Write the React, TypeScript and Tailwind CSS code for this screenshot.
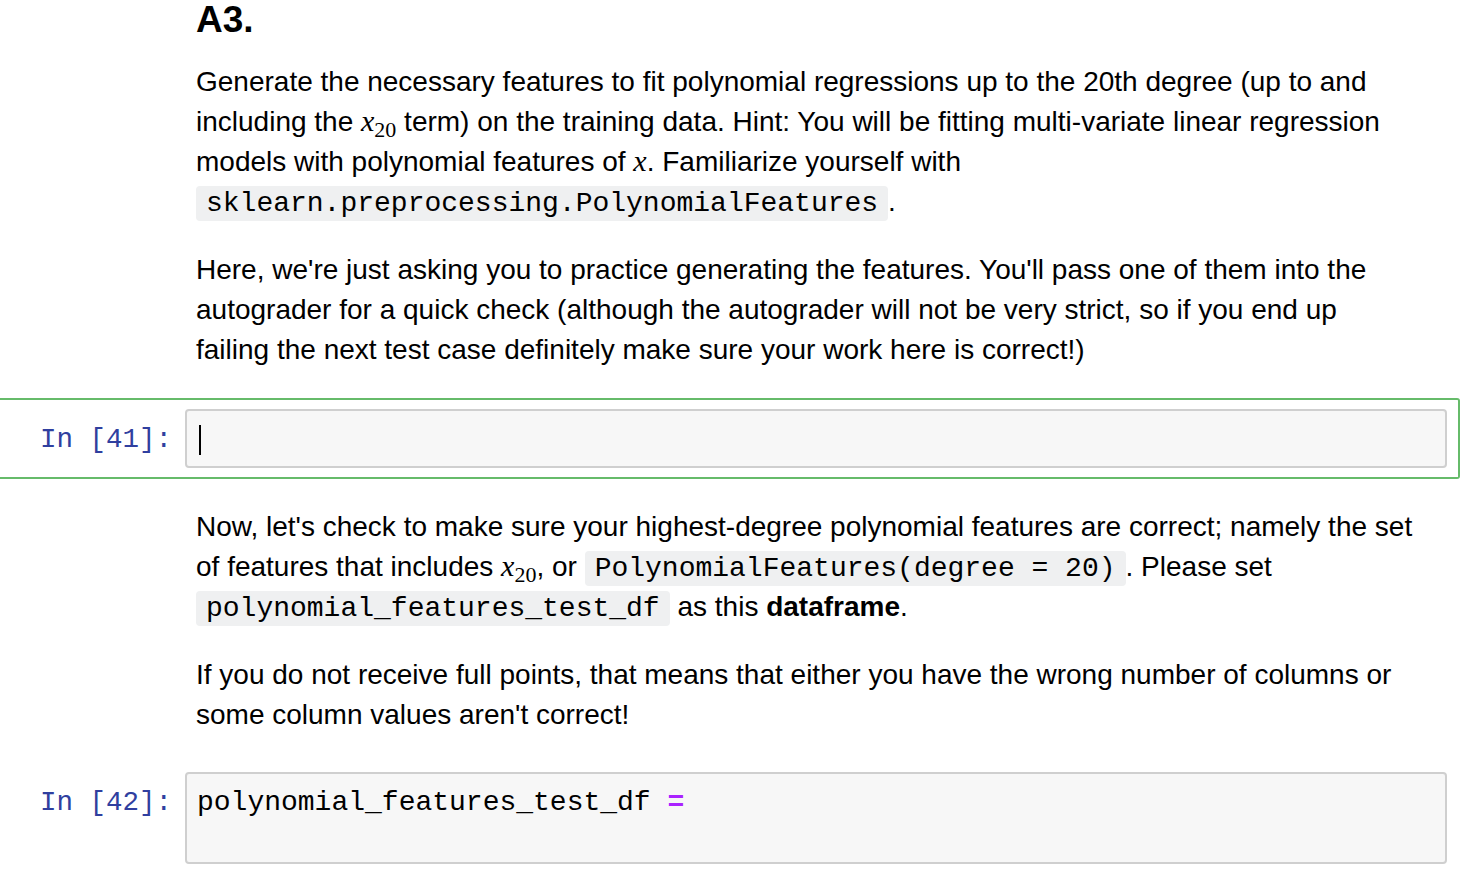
import React from 'react';

const sans = "font-['Liberation_Sans',Arial,sans-serif]";
const mono = "font-['Liberation_Mono','Courier_New',monospace]";

function Code({ children }: { children: React.ReactNode }) {
  return (
    <code className={`${mono} text-[28px] leading-none bg-[#eff0f1] rounded-[4px] px-[10px] py-[2px]`}>{children}</code>
  );
}

function MathX({ sub }: { sub?: string }) {
  return (
    <span className="font-['Liberation_Serif','Times_New_Roman',serif] whitespace-nowrap leading-none">
      <span className="italic text-[30px] leading-none">x</span>
      {sub && <span className="text-[22px] leading-none relative top-[6px]">{sub}</span>}
    </span>
  );
}

function Markdown({ children }: { children: React.ReactNode }) {
  return (
    <div className="border-2 border-transparent border-l-0 pl-[185px] pr-[11px]">
      <div className={`${sans} text-[28px] leading-[40px] text-black px-[11px] w-[1262px]`}>{children}</div>
    </div>
  );
}

function CodeCell({ n, lines, selected }: { n: number; lines: React.ReactNode[]; selected?: boolean }) {
  return (
    <div
      className={`flex w-[1460px] border-2 border-l-0 rounded-r-[3px] py-[9px] ${selected ? 'border-[#66bb6a]' : 'border-transparent'}`}
    >
      <div className={`${mono} w-[185px] shrink-0 text-right pr-[13px] text-[#303f9f] text-[27.5px] leading-[33px] pt-[14px]`}>
        In&nbsp;[{n}]:
      </div>
      <div className="flex-1 mr-[11px] bg-[#f7f7f7] border-2 border-[#cfcfcf] rounded-[4px] pt-[12px] pb-[10px] px-[10px]">
        {lines.map((l, i) => (
          <div key={i} className={`${mono} text-[28px] leading-[33px] text-black h-[33px]`}>
            {l}
          </div>
        ))}
      </div>
    </div>
  );
}

export default function App() {
  return (
    <div className="w-[1474px] h-[886px] overflow-hidden bg-white">
      <Markdown>
        <h3 className="text-[37px] leading-[40px] font-bold -mt-[2px] mb-[22px]">A3.</h3>
        <p className="mb-[28px]">
          Generate the necessary features to fit polynomial regressions up to the 20th degree (up to and including the{' '}
          <MathX sub="20" /> term) on the training data. Hint: You will be fitting multi-variate linear regression
          models with polynomial features of <MathX />. Familiarize yourself with{' '}
          <Code>sklearn.preprocessing.PolynomialFeatures</Code>.
        </p>
        <p className="mb-[26px]">
          Here, we're just asking you to practice generating the features. You'll pass one of them into the autograder
          for a quick check (although the autograder will not be very strict, so if you end up
          <br />
          failing the next test case definitely make sure your work here is correct!)
        </p>
      </Markdown>

      <CodeCell
        n={41}
        selected
        lines={[<span className="inline-block w-[2px] h-[30px] bg-black ml-[2px] align-middle" />]}
      />

      <Markdown>
        <p className="mt-[26px] mb-[28px]">
          Now, let's check to make sure your highest-degree polynomial features are correct; namely the set of features
          that includes <MathX sub="20" />, or <Code>PolynomialFeatures(degree = 20)</Code>. Please set{' '}
          <Code>polynomial_features_test_df</Code> as this <b>dataframe</b>.
        </p>
        <p className="mb-[24px]">
          If you do not receive full points, that means that either you have the wrong number of columns or some column
          values aren't correct!
        </p>
      </Markdown>

      <CodeCell
        n={42}
        lines={[
          <>
            polynomial_features_test_df <span className="text-[#aa22ff] font-bold">=</span>
          </>,
          '',
        ]}
      />
    </div>
  );
}
